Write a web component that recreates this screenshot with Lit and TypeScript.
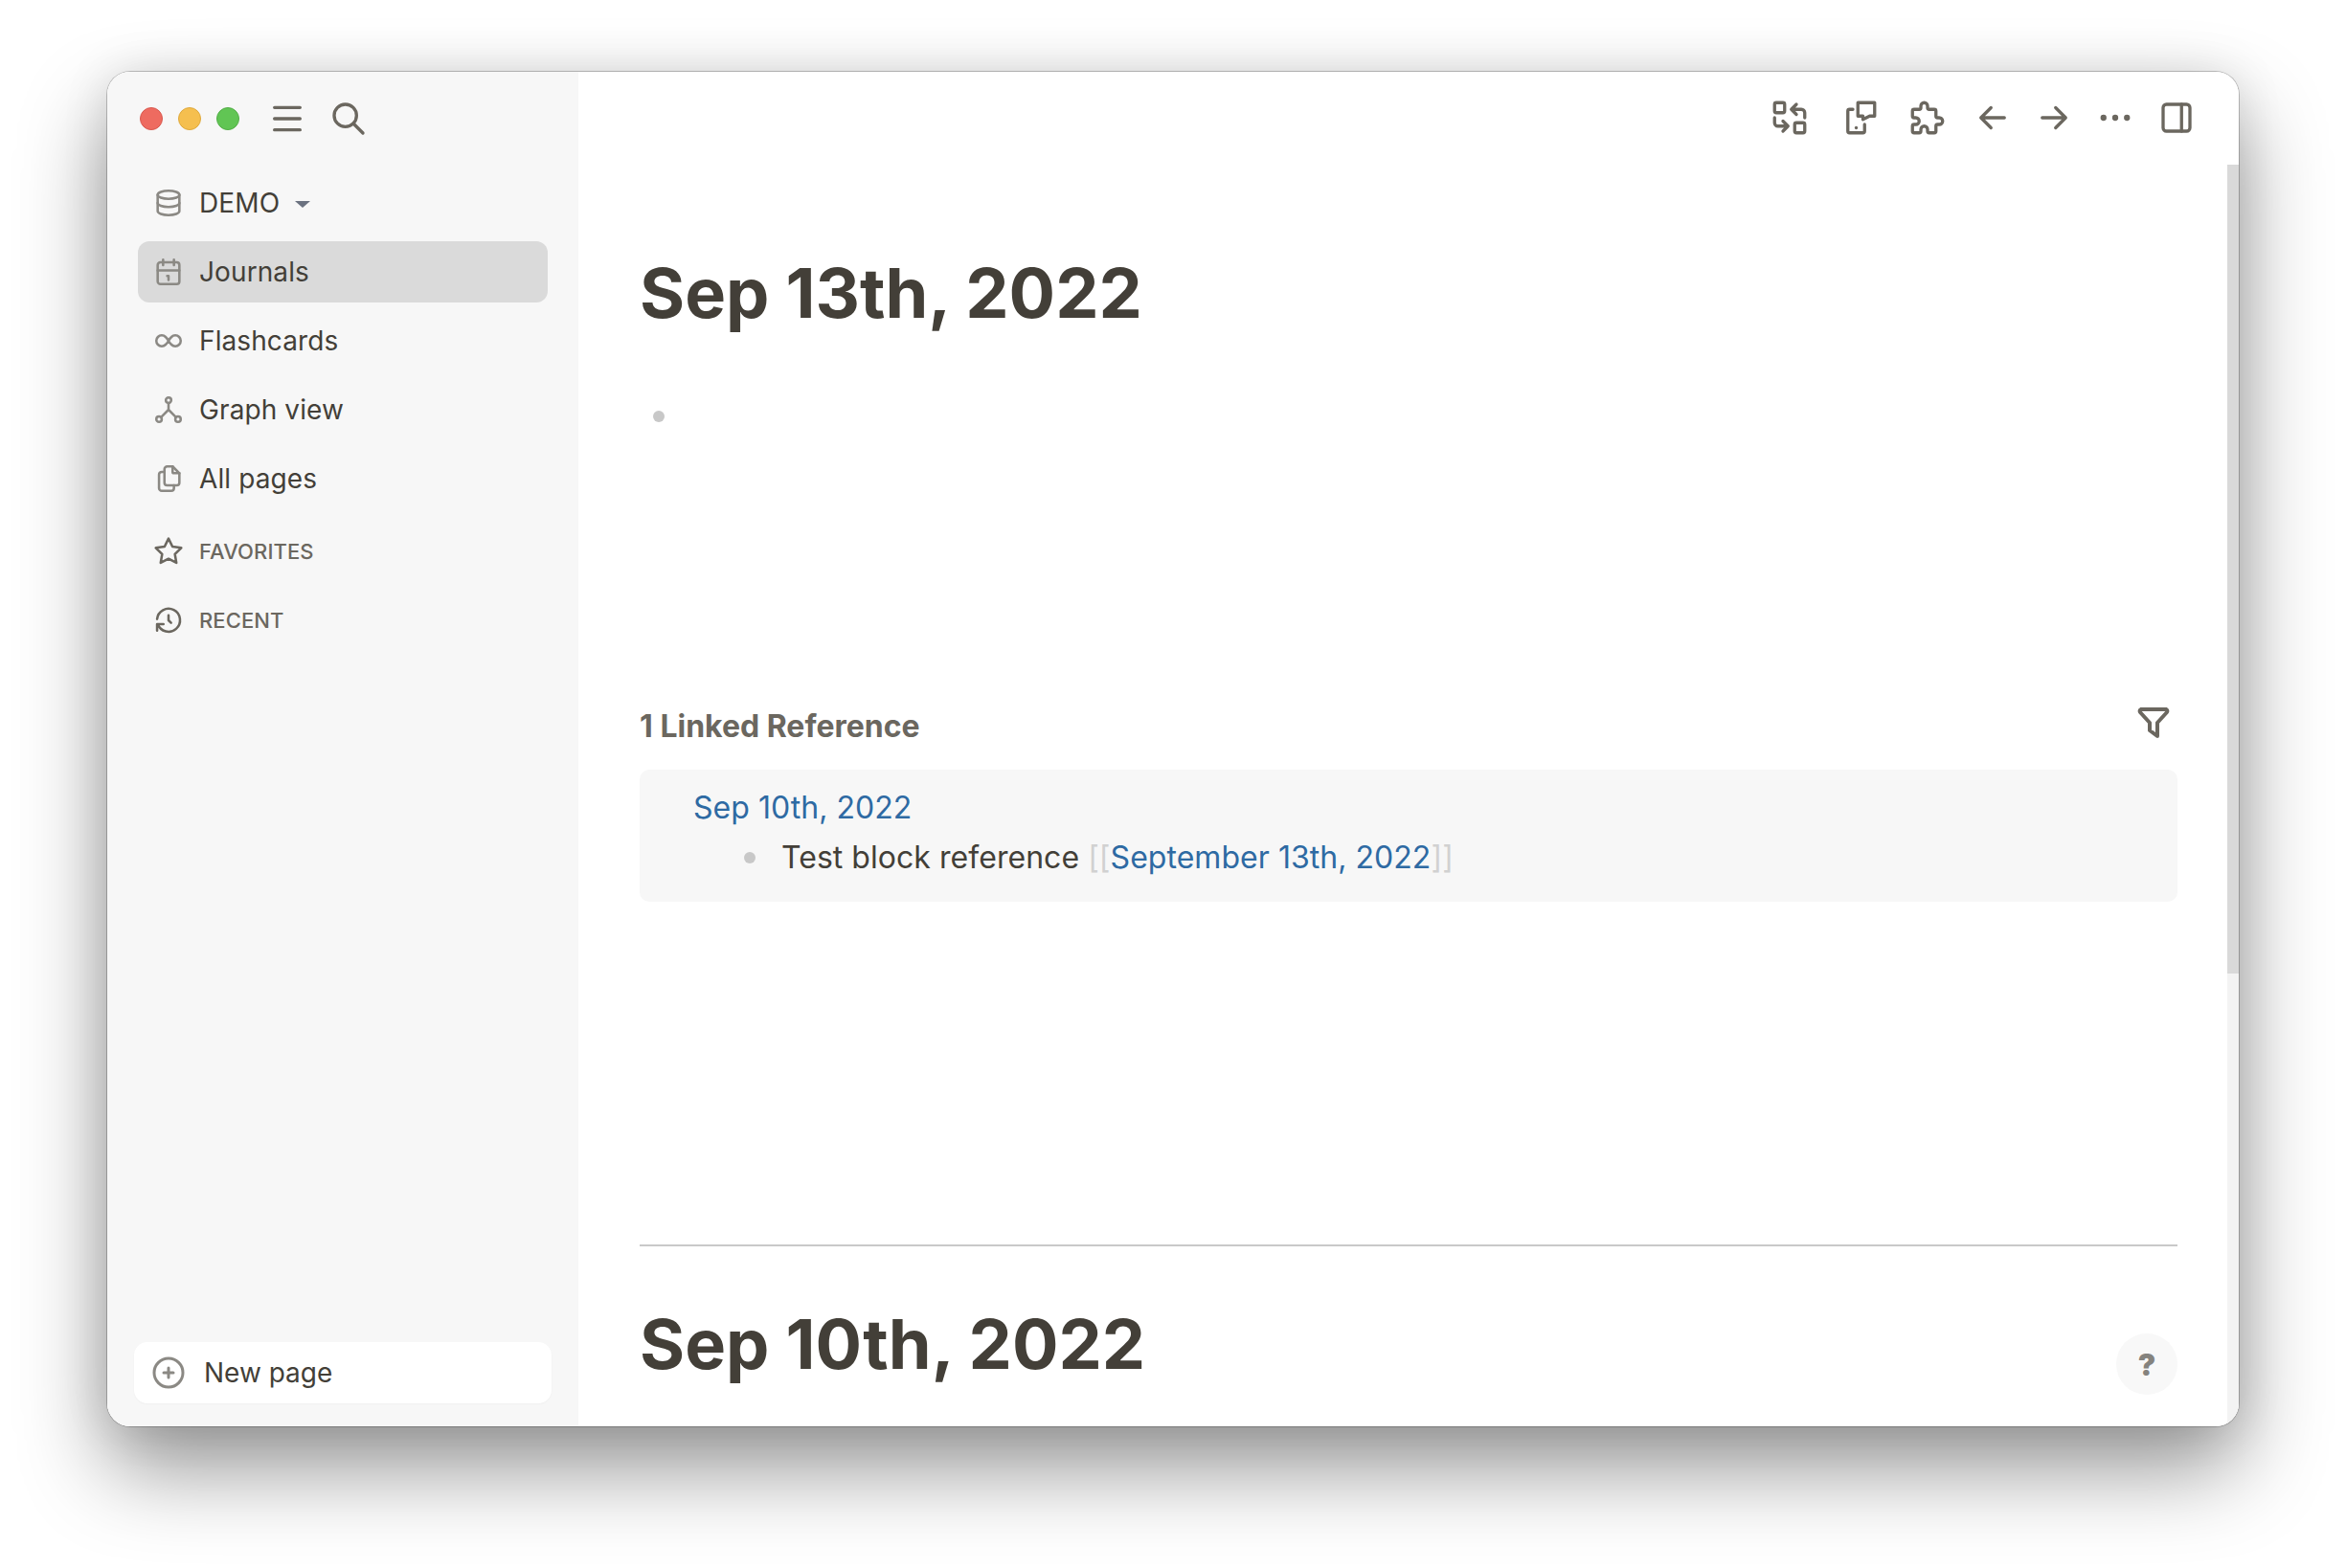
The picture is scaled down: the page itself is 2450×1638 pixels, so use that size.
import { LitElement, html, css, svg } from "lit";
import { customElement } from "lit/decorators.js";

const ic = (body: unknown, cls = "") => html`<svg class="ic ${cls}" viewBox="0 0 24 24">${body}</svg>`;

const icons = {
  menu: svg`<path d="M4 5h16M4 12h16M4 19h16"/>`,
  search: svg`<circle cx="10" cy="10" r="7"/><path d="M21 21l-6-6"/>`,
  db: svg`<ellipse cx="12" cy="6" rx="8" ry="3"/><path d="M4 6v6c0 1.66 3.58 3 8 3s8-1.34 8-3V6"/><path d="M4 12v6c0 1.66 3.58 3 8 3s8-1.34 8-3v-6"/>`,
  cal: svg`<rect x="4" y="5" width="16" height="16" rx="2"/><path d="M16 3v4M8 3v4M4 11h16M11 15h1v3"/>`,
  inf: svg`<path d="M9.828 9.172a4 4 0 1 0 0 5.656a10 10 0 0 0 2.172 -2.828a10 10 0 0 1 2.172 -2.828a4 4 0 1 1 0 5.656a10 10 0 0 1 -2.172 -2.828a10 10 0 0 0 -2.172 -2.828"/>`,
  graph: svg`<circle cx="12" cy="5" r="2"/><circle cx="5" cy="19" r="2"/><circle cx="19" cy="19" r="2"/><path d="M12 7v5l-5.5 5.5M12 12l5.5 5.5"/>`,
  files: svg`<path d="M15 3v4a1 1 0 0 0 1 1h4"/><path d="M18 17h-7a2 2 0 0 1 -2 -2v-10a2 2 0 0 1 2 -2h4l5 5v7a2 2 0 0 1 -2 2z"/><path d="M16 17v2a2 2 0 0 1 -2 2h-7a2 2 0 0 1 -2 -2v-10a2 2 0 0 1 2 -2h2"/>`,
  star: svg`<path d="M12 17.75l-6.172 3.245l1.179 -6.873l-5 -4.867l6.9 -1l3.086 -6.253l3.086 6.253l6.9 1l-5 4.867l1.179 6.873z"/>`,
  history: svg`<path d="M12 8v4l2 2"/><path d="M3.05 11a9 9 0 1 1 .5 4m-.5 5v-5h5"/>`,
  plus: svg`<circle cx="12" cy="12" r="9"/><path d="M9 12h6M12 9v6"/>`,
  swap: svg`<rect x="3" y="3" width="6" height="6" rx="1"/><rect x="15" y="15" width="6" height="6" rx="1"/><path d="M21 12V9a2 2 0 0 0-2-2h-6M13 7l3 3M13 7l3-3"/><path d="M3 12v3a2 2 0 0 0 2 2h6M11 17l-3 3M11 17l-3-3"/>`,
  mobile: svg`<path d="M11 3h10v8h-3l-4 2v-2h-3z"/><path d="M15 16v4a1 1 0 0 1 -1 1h-8a1 1 0 0 1 -1 -1v-12a1 1 0 0 1 1 -1h2"/><path d="M10 18v.01"/>`,
  puzzle: svg`<path d="M4 7h3a1 1 0 0 0 1 -1v-1a2 2 0 0 1 4 0v1a1 1 0 0 0 1 1h3a1 1 0 0 1 1 1v3a1 1 0 0 0 1 1h1a2 2 0 0 1 0 4h-1a1 1 0 0 0 -1 1v3a1 1 0 0 1 -1 1h-3a1 1 0 0 1 -1 -1v-1a2 2 0 0 0 -4 0v1a1 1 0 0 1 -1 1h-3a1 1 0 0 1 -1 -1v-3a1 1 0 0 1 1 -1h1a2 2 0 0 0 0 -4h-1a1 1 0 0 1 -1 -1v-3a1 1 0 0 1 1 -1"/>`,
  left: svg`<path d="M5 12h14M5 12l6 6M5 12l6-6"/>`,
  right: svg`<path d="M5 12h14M13 18l6-6M13 6l6 6"/>`,
  dots: svg`<path class="dot" d="M5 12h.01M12 12h.01M19 12h.01"/>`,
  side: svg`<rect x="4" y="4" width="16" height="16" rx="2"/><path d="M15 4v16"/>`,
  filter: svg`<path d="M5.5 5h13a1 1 0 0 1 .5 1.5l-5 5.5v7l-4 -3v-4l-5 -5.5a1 1 0 0 1 .5 -1.5"/>`,
};

@customElement("app-root")
export class AppRoot extends LitElement {
  static styles = css`
    :host {
      display: block;
      width: 2450px;
      height: 1638px;
      box-sizing: border-box;
      padding: 75px 112px 148px;
      background: #fff;
      font-family: Inter, "Noto Sans", sans-serif;
      color: #433f38;
      overflow: hidden;
    }
    .window {
      position: relative;
      display: flex;
      width: 2226px;
      height: 1415px;
      border-radius: 24px;
      overflow: hidden;
      background: #fff;
    }
    .shadow {
      border-radius: 24px;
      box-shadow: 0 0 0 1px rgba(0, 0, 0, 0.22), 0 44px 90px rgba(0, 0, 0, 0.42), 0 0 50px rgba(0, 0, 0, 0.1);
    }
    .ic {
      width: 36px;
      height: 36px;
      flex: none;
      fill: none;
      stroke: #6b675f;
      stroke-width: 2;
      stroke-linecap: round;
      stroke-linejoin: round;
    }
    .ic .dot {
      stroke-width: 3.6;
    }

    /* sidebar */
    .side {
      width: 492px;
      flex: none;
      display: flex;
      flex-direction: column;
      background: #f7f7f7;
      padding: 0 32px;
      box-sizing: border-box;
    }
    .top {
      display: flex;
      align-items: center;
      height: 97px;
    }
    .light {
      width: 24px;
      height: 24px;
      border-radius: 50%;
      box-sizing: border-box;
      margin: 0 16px 0 0;
      flex: none;
    }
    .light.r {
      background: #ee6b60;
      border: 1px solid #d9594f;
      margin-left: 2px;
    }
    .light.y {
      background: #f5bf4f;
      border: 1px solid #dfa93c;
    }
    .light.g {
      background: #61c554;
      border: 1px solid #52ae46;
    }
    .top .menu {
      width: 40px;
      height: 40px;
      margin-left: 14px;
    }
    .top .search {
      width: 40px;
      height: 40px;
      margin-left: 24px;
    }
    .row {
      display: flex;
      align-items: center;
      height: 64px;
      margin-bottom: 8px;
      border-radius: 12px;
      font-size: 28px;
      letter-spacing: 0.1px;
      padding-left: 15px;
    }
    .row .ic {
      width: 34px;
      height: 34px;
      margin-right: 15px;
      stroke: #8b8984;
      stroke-width: 1.8;
    }
    .row.demo {
      margin-top: 8px;
    }
    .row.active {
      background: #dadada;
    }
    .caret {
      width: 0;
      height: 0;
      margin-left: 16px;
      margin-top: 3px;
      border-left: 8px solid transparent;
      border-right: 8px solid transparent;
      border-top: 7px solid #6b7280;
    }
    .sec {
      display: flex;
      align-items: center;
      height: 64px;
      margin-bottom: 8px;
      padding-left: 16px;
      font-size: 22px;
      font-weight: 500;
      letter-spacing: 0.1px;
      color: #6b675f;
    }
    .sec.first {
      margin-top: 4px;
    }
    .sec .ic {
      width: 32px;
      height: 32px;
      margin-right: 16px;
      stroke-width: 1.9;
    }
    .grow {
      flex: 1;
    }
    .new {
      display: flex;
      align-items: center;
      height: 64px;
      margin: 0 -4px 24px -4px;
      background: #fff;
      border-radius: 14px;
      padding-left: 16px;
      font-size: 28px;
      box-shadow: 0 1px 2px rgba(0, 0, 0, 0.03);
    }
    .new .ic {
      width: 40px;
      height: 40px;
      margin-right: 17px;
      stroke: #8b8984;
      stroke-width: 1.8;
    }

    /* main */
    .main {
      flex: 1;
      min-width: 0;
      display: flex;
      flex-direction: column;
      overflow: hidden;
      padding: 0 64px;
      box-sizing: border-box;
    }
    .bar {
      display: flex;
      justify-content: flex-end;
      align-items: center;
      height: 96px;
      flex: none;
      margin-right: -31px;
    }
    .btn {
      display: flex;
      justify-content: center;
      align-items: center;
      width: 64px;
    }
    .btn .ic {
      width: 42px;
      height: 42px;
      stroke-width: 1.9;
    }
    .btn.w1 {
      margin-right: 9px;
    }
    .btn.w2 {
      margin-right: 7px;
    }
    .btn.w3 {
      margin-right: 4px;
    }
    .h1 {
      margin: 0;
      font-size: 72px;
      line-height: 90px;
      font-weight: 700;
      flex: none;
    }
    .h1.a {
      margin-top: 90px;
    }
    .h1.b {
      margin-top: 57px;
    }
    .bullet {
      width: 12px;
      height: 12px;
      border-radius: 50%;
      background: #c8c8c8;
      flex: none;
    }
    .b0 {
      margin: 78px 0 0 14px;
    }
    .refhead {
      display: flex;
      justify-content: space-between;
      align-items: center;
      height: 44px;
      margin-top: 295px;
      font-size: 32px;
      font-weight: 700;
      color: #6b675f;
      flex: none;
    }
    .refhead .ic {
      width: 48px;
      height: 48px;
      margin: -6px 1px 0 0;
      stroke-width: 2;
    }
    .card {
      margin-top: 24px;
      height: 138px;
      background: #f7f7f7;
      border-radius: 10px;
      padding: 14px 0 0 56px;
      box-sizing: border-box;
      font-size: 32px;
      letter-spacing: 0.04px;
      line-height: 52px;
      flex: none;
    }
    .link {
      color: #2e6aa3;
    }
    .item {
      display: flex;
      align-items: center;
    }
    .item .bullet {
      margin: 0 27px 0 53px;
    }
    .br {
      color: #d1d1d1;
    }
    .hr {
      height: 2px;
      background: #c9c9c9;
      margin-top: 358px;
      flex: none;
    }

    .scroll {
      position: absolute;
      top: 97px;
      right: 0;
      bottom: 0;
      width: 12px;
      background: #f3f3f3;
    }
    .thumb {
      height: 845px;
      background: #d9d9d9;
    }
    .help {
      position: absolute;
      left: 2098px;
      top: 1318px;
      width: 64px;
      height: 64px;
      border-radius: 50%;
      background: #f8f8f8;
      display: flex;
      align-items: center;
      justify-content: center;
      font-size: 31px;
      font-weight: 900;
      color: #85837e;
    }
  `;

  render() {
    return html`
      <div class="shadow">
        <div class="window">
          <aside class="side">
            <div class="top">
              <span class="light r"></span><span class="light y"></span><span class="light g"></span>
              ${ic(icons.menu, "menu")}${ic(icons.search, "search")}
            </div>
            <div class="row demo">${ic(icons.db)}DEMO<span class="caret"></span></div>
            <div class="row active">${ic(icons.cal)}Journals</div>
            <div class="row">${ic(icons.inf)}Flashcards</div>
            <div class="row">${ic(icons.graph)}Graph view</div>
            <div class="row">${ic(icons.files)}All pages</div>
            <div class="sec first">${ic(icons.star)}FAVORITES</div>
            <div class="sec">${ic(icons.history)}RECENT</div>
            <div class="grow"></div>
            <div class="new">${ic(icons.plus)}New page</div>
          </aside>
          <main class="main">
            <div class="bar">
              <span class="btn w1">${ic(icons.swap)}</span>
              <span class="btn w2">${ic(icons.mobile)}</span>
              <span class="btn w3">${ic(icons.puzzle)}</span>
              <span class="btn">${ic(icons.left)}</span>
              <span class="btn">${ic(icons.right)}</span>
              <span class="btn">${ic(icons.dots)}</span>
              <span class="btn">${ic(icons.side)}</span>
            </div>
            <h1 class="h1 a">Sep 13th, 2022</h1>
            <div class="bullet b0"></div>
            <div class="refhead"><span>1 Linked Reference</span>${ic(icons.filter)}</div>
            <div class="card">
              <div class="link">Sep 10th, 2022</div>
              <div class="item">
                <span class="bullet"></span>
                <span>Test block reference <span class="br">[[</span><span class="link">September 13th, 2022</span><span class="br">]]</span></span>
              </div>
            </div>
            <div class="hr"></div>
            <h1 class="h1 b">Sep 10th, 2022</h1>
          </main>
          <div class="scroll"><div class="thumb"></div></div>
          <div class="help">?</div>
        </div>
      </div>
    `;
  }
}
